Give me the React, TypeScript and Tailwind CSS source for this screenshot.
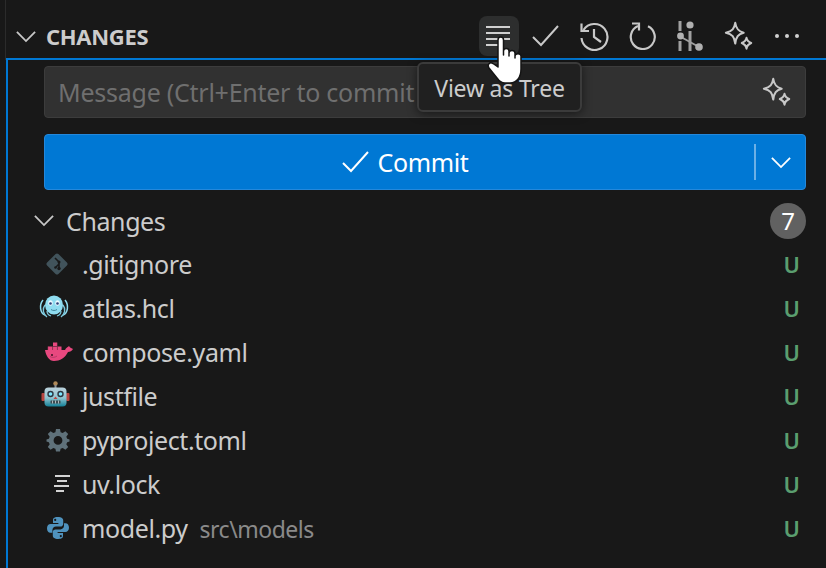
import type { ReactNode } from 'react';

const font = "font-['Noto_Sans','Open_Sans',sans-serif]";

const Chevron = ({ className = '' }: { className?: string }) => (
  <svg viewBox="0 0 22 14" className={className} fill="none" stroke="currentColor" strokeWidth="2">
    <path d="M1 2 L11 12 L21 2" />
  </svg>
);

const Sparkle = () => (
  <svg viewBox="0 0 32 32" className="w-[30px] h-[30px]" fill="none" stroke="#c8c8c8" strokeWidth="2.2">
    <path d="M12 2 C13 8 15 11 21 12.5 C15 14 13 17 12 24 C11 17 9 14 2 12.5 C9 11 11 8 12 2 Z" strokeLinejoin="round" />
    <path d="M24 18 C24.5 21 25.5 22 29 23.5 C25.5 25 24.5 26 24 29.5 C23.5 26 22.5 25 19 23.5 C22.5 22 23.5 21 24 18 Z" strokeLinejoin="round" />
  </svg>
);

const GitIcon = () => (
  <svg viewBox="0 0 24 24" className="ml-[7px] w-[24px] h-[24px]">
    <rect x="4" y="4" width="16" height="16" rx="2" transform="rotate(45 12 12)" fill="#41535b" />
    <path d="M10 6 L14 10 V16 M14 12 L11 15" stroke="#181818" strokeWidth="1.6" fill="none" />
    <circle cx="14" cy="10" r="1.5" fill="#181818" />
    <circle cx="14" cy="16.5" r="1.7" fill="#181818" />
    <circle cx="10.5" cy="15.5" r="1.3" fill="#181818" />
  </svg>
);

const AtlasIcon = () => (
  <svg viewBox="0 0 30 24" className="ml-[1px] -mt-[5px] w-[30px] h-[24px]" fill="none">
    <path d="M6 21 C1 19 0 11 4 6 M24 21 C29 19 30 11 26 6" stroke="#8fdcf0" strokeWidth="1.5" />
    <path d="M8 23 C4 20 3 15 6 11 M22 23 C26 20 27 15 24 11" stroke="#7cc9dd" strokeWidth="1.4" />
    <path d="M12 22 C9 21 8 19 8 17 M18 22 C21 21 22 19 22 17" stroke="#7cc9dd" strokeWidth="1.2" />
    <ellipse cx="15" cy="11" rx="9" ry="9.5" fill="#8fdcf0" />
    <ellipse cx="11.5" cy="9" rx="2.2" ry="2.8" fill="#eefaff" />
    <ellipse cx="18.5" cy="9" rx="2.2" ry="2.8" fill="#eefaff" />
    <circle cx="11.5" cy="9.5" r="1.3" fill="#2b3f7a" />
    <circle cx="18.5" cy="9.5" r="1.3" fill="#2b3f7a" />
    <path d="M12 15.5 C13.5 16.8 16.5 16.8 18 15.5" stroke="#3a7f95" strokeWidth="0.9" />
  </svg>
);

const DockerIcon = () => (
  <svg viewBox="0 0 28 19" className="ml-[7px] -mt-[2px] w-[28px] h-[19px]">
    <path d="M0 8 H20 C21 5.5 23 5 24 4 C25 6 27 6.5 28 7 C27 9 25 10 23 10 C20 16 15 19 9 19 C4 19 1 14 0 8 Z" fill="#e8487f" />
    <path d="M3 4.5 H7.5 V8 H3 Z M8 4.5 H12 V8 H8 Z M8 0.5 H12 V4 H8 Z M12.5 4.5 H16.5 V8 H12.5 Z" fill="#e8487f" />
    <path d="M3 4.5 V8 M7.7 4.5 V8 M12.2 0.5 V8" stroke="#b93a66" strokeWidth="0.5" />
    <circle cx="7" cy="13" r="1" fill="#3a1020" />
    <path d="M5 14.5 C7 16 10 15.5 12 14" stroke="#a83560" strokeWidth="0.8" fill="none" />
  </svg>
);

const RobotIcon = () => (
  <svg viewBox="0 0 29 26" className="ml-[3px] -mt-[4px] w-[29px] h-[26px]">
    <circle cx="14.5" cy="2.5" r="2.2" fill="#b08a5a" />
    <rect x="13.5" y="4" width="2" height="3" fill="#8a8f96" />
    <rect x="0.5" y="12" width="3.5" height="8" rx="1" fill="#b8453f" />
    <rect x="25" y="12" width="3.5" height="8" rx="1" fill="#b8453f" />
    <defs>
      <linearGradient id="robot-head" x1="0" y1="0" x2="0" y2="1">
        <stop offset="0" stopColor="#bcd2dc" />
        <stop offset="0.55" stopColor="#8fc4d0" />
        <stop offset="1" stopColor="#147f96" />
      </linearGradient>
    </defs>
    <rect x="3.5" y="6.5" width="22" height="19" rx="4" fill="url(#robot-head)" />
    <circle cx="9.5" cy="13" r="3.2" fill="#2c3640" />
    <circle cx="19.5" cy="13" r="3.2" fill="#2c3640" />
    <circle cx="9.5" cy="13" r="1.8" fill="#7fe6ff" />
    <circle cx="19.5" cy="13" r="1.8" fill="#7fe6ff" />
    <path d="M14.5 15.5 L16.5 18 H12.5 Z" fill="#c0453f" />
    <rect x="9.5" y="19.5" width="10" height="3" rx="0.5" fill="#3b4a50" />
    <path d="M11.5 19.5 V22.5 M14.5 19.5 V22.5 M17.5 19.5 V22.5" stroke="#c9d4d8" strokeWidth="0.8" />
  </svg>
);

const GearIcon = () => (
  <svg viewBox="0 0 24 24" className="ml-[8px] w-[24px] h-[24px]" fill="#5f717a">
    <path
      fillRule="evenodd"
      d="M10 1 H14 L14.6 4.2 L16.7 5.1 L19.4 3.2 L22.2 6 L20.3 8.7 L21.2 10.8 L23.5 11.4 V13.6 L21.2 14.2 L20.3 16.3 L22.2 19 L19.4 21.8 L16.7 19.9 L14.6 20.8 L14 23.5 H10 L9.4 20.8 L7.3 19.9 L4.6 21.8 L1.8 19 L3.7 16.3 L2.8 14.2 L0.5 13.6 V11.4 L2.8 10.8 L3.7 8.7 L1.8 6 L4.6 3.2 L7.3 5.1 L9.4 4.2 Z M12 8 A4.4 4.4 0 1 0 12 16.8 A4.4 4.4 0 1 0 12 8 Z"
    />
  </svg>
);

const LockIcon = () => (
  <svg viewBox="0 0 18 18" className="ml-[15px] -mt-[3px] w-[18px] h-[18px]" stroke="#d4d4d4" strokeWidth="2" fill="none">
    <path d="M2 2 H17 M4 7 H14 M1 12 H16 M3 17 H11" />
  </svg>
);

const PythonIcon = () => (
  <svg viewBox="0 0 24 24" className="ml-[8px] -mt-[1px] w-[24px] h-[24px]" fill="#4f92bd">
    <path d="M11.8 1 C7.5 1 7 2.8 7 4.2 V7 H12.4 V8 H4.6 C2.6 8 1 9.5 1 12.2 C1 15 2.4 16.8 4.4 16.8 H6.4 V14.2 C6.4 12.2 8 10.6 10 10.6 H14.6 C16 10.6 17.2 9.4 17.2 8 V4.2 C17.2 2.6 15.6 1 11.8 1 Z M9.2 2.8 A1.1 1.1 0 1 1 9.2 5 A1.1 1.1 0 1 1 9.2 2.8 Z" />
    <path d="M12.2 23 C16.5 23 17 21.2 17 19.8 V17 H11.6 V16 H19.4 C21.4 16 23 14.5 23 11.8 C23 9 21.6 7.2 19.6 7.2 H18 V9.8 C18 11.8 16.4 13.4 14.4 13.4 H9.4 C8 13.4 6.8 14.6 6.8 16 V19.8 C6.8 21.4 8.4 23 12.2 23 Z M14.8 19 A1.1 1.1 0 1 1 14.8 21.2 A1.1 1.1 0 1 1 14.8 19 Z" />
  </svg>
);

const files: { name: string; icon: ReactNode; hint?: string }[] = [
  { name: '.gitignore', icon: <GitIcon /> },
  { name: 'atlas.hcl', icon: <AtlasIcon /> },
  { name: 'compose.yaml', icon: <DockerIcon /> },
  { name: 'justfile', icon: <RobotIcon /> },
  { name: 'pyproject.toml', icon: <GearIcon /> },
  { name: 'uv.lock', icon: <LockIcon /> },
  { name: 'model.py', icon: <PythonIcon />, hint: 'src\\models' },
];

const ToolIcon = ({ children, active }: { children: ReactNode; active?: boolean }) => (
  <div className={`w-[40px] h-[40px] rounded-[8px] flex items-center justify-center ${active ? 'bg-[#2d2e2e]' : ''}`}>
    {children}
  </div>
);

export default function App() {
  return (
    <div className={`${font} relative w-[826px] h-[568px] overflow-hidden bg-[#181818] text-[#cccccc]`}>
      <div className="ml-[5px] h-[60px] border-l border-[#2b2b2b]">
        <div className="h-full pl-[10px] pr-[19px] pt-[16px] flex items-start border-b-2 border-[#0078d4]">
          <div className="h-[40px] flex items-center flex-1">
            <Chevron className="w-[20px] h-[13px] text-[#c8c8c8]" />
            <span className="ml-[10px] text-[22px] font-bold text-[#cccccc] tracking-[-0.3px]">CHANGES</span>
          </div>
          <div className="flex gap-[8px] h-[40px]">
            <ToolIcon active>
              <svg viewBox="0 0 24 22" className="-ml-[2px] w-[24px] h-[22px]" stroke="#d0d0d0" strokeWidth="2" fill="none">
                <path d="M0 2 H24 M0 8 H24 M0 14 H24 M0 20 H15" />
              </svg>
            </ToolIcon>
            <ToolIcon>
              <svg viewBox="0 0 28 22" className="-ml-[2px] w-[28px] h-[22px]" stroke="#c8c8c8" strokeWidth="2" fill="none">
                <path d="M1 12 L9 20 L26 1" />
              </svg>
            </ToolIcon>
            <ToolIcon>
              <svg viewBox="0 0 30 30" className="-ml-[2px] w-[30px] h-[30px]" stroke="#c8c8c8" strokeWidth="2.2" fill="none">
                <path d="M4.5 9 A13 13 0 1 1 2.5 17" />
                <path d="M2.5 2.5 V10 H10" />
                <path d="M15 8 V16 L22 21" />
              </svg>
            </ToolIcon>
            <ToolIcon>
              <svg viewBox="0 0 28 28" className="-ml-[1px] w-[28px] h-[28px]" stroke="#c8c8c8" strokeWidth="2.2" fill="none">
                <path d="M9 4 A12 12 0 1 0 19 4.2" />
                <path d="M3 2 H10 V9" transform="translate(0 -0.5)" />
              </svg>
            </ToolIcon>
            <ToolIcon>
              <svg viewBox="0 0 28 32" className="w-[28px] h-[32px]" stroke="#a0a0a0" strokeWidth="3" fill="#b0b0b0">
                <path d="M3 1 V11 M3 21 V31 M13 11 V31" fill="none" />
                <path d="M4 17 L22 27" strokeWidth="2" fill="none" />
                <circle cx="13" cy="5" r="3.6" stroke="none" />
                <circle cx="3.5" cy="16" r="3.4" stroke="none" />
                <circle cx="22" cy="27" r="3.8" stroke="none" />
              </svg>
            </ToolIcon>
            <ToolIcon>
              <Sparkle />
            </ToolIcon>
            <ToolIcon>
              <div className="flex gap-[6px] -ml-[1px]">
                <span className="w-[4px] h-[4px] rounded-full bg-[#d0d0d0]" />
                <span className="w-[4px] h-[4px] rounded-full bg-[#d0d0d0]" />
                <span className="w-[4px] h-[4px] rounded-full bg-[#d0d0d0]" />
              </div>
            </ToolIcon>
          </div>
        </div>
      </div>

      <div className="ml-[6px] h-[508px] border-l-2 border-[#0078d4] pt-[6px] text-[25px] tracking-[-0.4px]">
        <div className="ml-[36px] mr-[20px] h-[52px] rounded-[4px] bg-[#313131] border border-[#3c3c3c] flex items-center pl-[13px] pr-[13px]">
          <span className="pt-[2px] tracking-[-0.25px] text-[#6f6f6f] flex-1 whitespace-nowrap overflow-hidden">Message (Ctrl+Enter to commit on "main")</span>
          <Sparkle />
        </div>

        <div className="ml-[36px] mr-[20px] mt-[16px] h-[56px] rounded-[4px] bg-[#0078d4] border border-[#2488db] flex items-center text-white">
          <div className="flex-1 flex items-center justify-center gap-[8px] pl-[11px]">
            <svg viewBox="0 0 28 22" className="w-[28px] h-[22px]" stroke="#ffffff" strokeWidth="2" fill="none">
              <path d="M1 12 L9 20 L26 1" />
            </svg>
            <span className="leading-none">Commit</span>
          </div>
          <div className="w-[2px] h-[36px] bg-[#6cb0e6]" />
          <div className="w-[49px] flex justify-center">
            <Chevron className="w-[20px] h-[13px] text-white" />
          </div>
        </div>

        <div className="h-[43px] mt-[9px] ml-[26px] mr-[20px] flex items-center">
          <Chevron className="w-[20px] h-[13px] text-[#c8c8c8]" />
          <span className="ml-[12px] pt-[2px] flex-1">Changes</span>
          <span className="w-[36px] h-[36px] rounded-full bg-[#616161] text-white text-[24px] flex items-center justify-center">7</span>
        </div>

        <div>
          {files.map((f) => (
            <div key={f.name} className="h-[44px] pl-[30px] pr-[20px] flex items-center">
              <div className="w-[36px] flex justify-start">{f.icon}</div>
              <span className="ml-[8px] pt-[2px] whitespace-nowrap">{f.name}</span>
              {f.hint && <span className="ml-[12px] pt-[2px] text-[23px] tracking-[-0.5px] text-[#8a8a8a]">{f.hint}</span>}
              <span className="ml-auto mr-[6px] text-[22px] font-semibold tracking-normal text-[#5a9e6f]">U</span>
            </div>
          ))}
        </div>
      </div>

      <div className="absolute left-[417px] top-[62px] w-[165px] h-[50px] pt-[3px] flex items-center justify-center rounded-[6px] bg-[#202020] border-2 border-[#3b3b3b] text-[23px] tracking-[-0.2px] text-[#cccccc] shadow-[0_2px_10px_rgba(0,0,0,0.5)] whitespace-nowrap">
        View as Tree
      </div>

      <svg viewBox="0 0 36 50" className="absolute left-[487px] top-[35px] w-[36px] h-[50px]">
        <path
          d="M11 5 C11 1 16.5 1 16.5 5 V20 V16 C16.5 12.5 22 12.5 22 16 V21 V18 C22 14.5 28 14.5 28 18 V23 V21 C28 18 34 18 34 21 V34 C34 42 30 48 23 48 H18 C14 48 12 46 10 43 L2 33 C0 30 2.5 26.5 6 28.5 L11 32 Z"
          fill="#ffffff"
          stroke="#141414"
          strokeWidth="1.5"
          strokeLinejoin="round"
        />
      </svg>
    </div>
  );
}
